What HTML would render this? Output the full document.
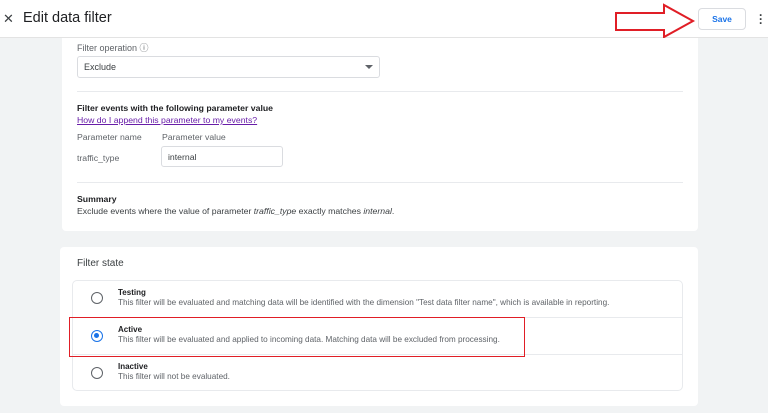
<!DOCTYPE html><html><head><style>
*{margin:0;padding:0;box-sizing:border-box}
body{width:768px;height:413px;background:#f1f3f4;font-family:"Liberation Sans",Arial,sans-serif;position:relative;overflow:hidden;color:#3c4043}
.a{position:absolute;white-space:nowrap}
.hdr{position:absolute;left:0;top:0;width:768px;height:38px;background:#fff;border-bottom:1px solid #e3e3e3}
.card{position:absolute;background:#fff;border-radius:4px}
.s{font-size:8.7px;color:#5f6368}
.b{font-size:8.7px;font-weight:bold;color:#202124}
.hr{position:absolute;height:1px;background:#e8eaed}
.radio{position:absolute;width:12px;height:12px;border:1.5px solid #5f6368;border-radius:50%}
</style></head><body>
<div class="hdr"></div>
<div class="a" style="left:3px;top:11px;font-size:13px;color:#3c4043">✕</div>
<div class="a" style="left:23px;top:10px;font-size:14.5px;color:#202124">Edit data filter</div>
<div class="a" style="left:698px;top:8px;width:48px;height:22px;border:1px solid #dadce0;border-radius:4px;background:#fff;color:#1a73e8;font-size:8.5px;text-align:center;line-height:20px;font-weight:bold">Save</div>
<div class="a" style="left:759px;top:13px;font-size:12px;line-height:4px;color:#3c4043;font-weight:bold">·<br>·<br>·</div>
<svg class="a" style="left:612px;top:2px" width="84" height="38"><path d="M4 11 H52 V3 L81 19 L52 35 V28 H4 Z" fill="none" stroke="#e01e26" stroke-width="2"/></svg>
<div class="card" style="left:62px;top:38px;width:636px;height:193px;border-radius:0 0 4px 4px"></div>
<div class="a s" style="left:77px;top:41px;font-size:9px">Filter operation ⓘ</div>
<div class="a" style="left:77px;top:56px;width:303px;height:22px;border:1px solid #dadce0;border-radius:3px;font-size:9px;padding:5px 6px;color:#3c4043">Exclude</div>
<div class="a" style="left:365px;top:65px;width:0;height:0;border-left:4px solid transparent;border-right:4px solid transparent;border-top:4px solid #5f6368"></div>
<div class="hr" style="left:77px;top:91px;width:606px"></div>
<div class="a b" style="left:77px;top:103px">Filter events with the following parameter value</div>
<div class="a" style="left:77px;top:115px;font-size:8.7px;color:#681da8;text-decoration:underline">How do I append this parameter to my events?</div>
<div class="a s" style="left:77px;top:132px">Parameter name</div>
<div class="a s" style="left:162px;top:132px">Parameter value</div>
<div class="a s" style="left:77px;top:153px">traffic_type</div>
<div class="a" style="left:161px;top:146px;width:122px;height:21px;border:1px solid #dadce0;border-radius:3px;font-size:8.7px;padding:5px 6px;color:#3c4043">internal</div>
<div class="hr" style="left:77px;top:182px;width:606px"></div>
<div class="a b" style="left:77px;top:194px">Summary</div>
<div class="a s" style="left:77px;top:206px;color:#3c4043">Exclude events where the value of parameter <i>traffic_type</i> exactly matches <i>internal</i>.</div>
<div class="card" style="left:60px;top:247px;width:638px;height:159px"></div>
<div class="a" style="left:77px;top:258px;font-size:10px;color:#3c4043">Filter state</div>
<div class="a" style="left:72px;top:280px;width:611px;height:111px;border:1px solid #e8eaed;border-radius:5px"></div>
<div class="hr" style="left:73px;top:317px;width:609px"></div>
<div class="hr" style="left:73px;top:354px;width:609px"></div>
<div class="radio" style="left:91px;top:292px"></div>
<div class="radio" style="left:91px;top:330px;border-color:#1a73e8"><div style="position:absolute;left:2px;top:2px;width:5px;height:5px;border-radius:50%;background:#1a73e8"></div></div>
<div class="radio" style="left:91px;top:367px"></div>
<div class="a b" style="left:118px;top:288px;font-size:8px">Testing</div>
<div class="a s" style="left:118px;top:298px;font-size:8.2px">This filter will be evaluated and matching data will be identified with the dimension "Test data filter name", which is available in reporting.</div>
<div class="a b" style="left:118px;top:325px;font-size:8px">Active</div>
<div class="a s" style="left:118px;top:335px;font-size:8.2px">This filter will be evaluated and applied to incoming data. Matching data will be excluded from processing.</div>
<div class="a b" style="left:118px;top:362px;font-size:8px">Inactive</div>
<div class="a s" style="left:118px;top:372px;font-size:8.2px">This filter will not be evaluated.</div>
<div class="a" style="left:69px;top:317px;width:456px;height:40px;border:1.5px solid #e01e26"></div>
</body></html>
